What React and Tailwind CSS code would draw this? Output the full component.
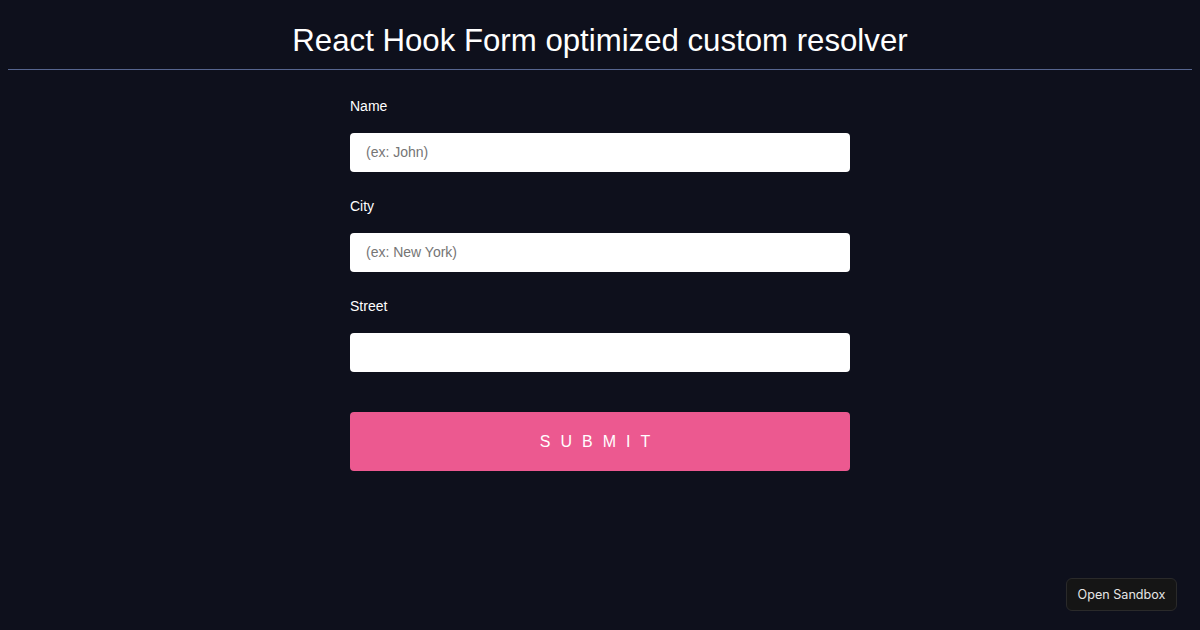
export default function App() {
  const font = { fontFamily: '"Liberation Sans", Arial, sans-serif' };
  return (
    <div className="relative w-[1200px] h-[630px] bg-[#0e101c] overflow-hidden" style={font}>
      <div className="px-[8px] pt-[22px]">
        <h1 className="text-[31.2px] leading-[37px] font-normal text-white text-center pb-[10px] border-b border-[#56658f]">
          React Hook Form optimized custom resolver
        </h1>
      </div>
      <form className="w-[500px] mx-auto pt-[2px]">
        <label className="block mt-[20px] mb-[13px] text-[14px] leading-[28px] text-white">Name</label>
        <input
          className="block w-full h-[39px] rounded-[4px] bg-white px-[16px] pb-[1px] text-[14px] text-black placeholder:text-[#757575] outline-none"
          placeholder="(ex: John)"
          style={font}
        />
        <label className="block mt-[20px] mb-[13px] text-[14px] leading-[28px] text-white">City</label>
        <input
          className="block w-full h-[39px] rounded-[4px] bg-white px-[16px] pb-[1px] text-[14px] text-black placeholder:text-[#757575] outline-none"
          placeholder="(ex: New York)"
          style={font}
        />
        <label className="block mt-[20px] mb-[13px] text-[14px] leading-[28px] text-white">Street</label>
        <input
          className="block w-full h-[39px] rounded-[4px] bg-white px-[16px] text-[14px] text-black outline-none"
          style={font}
        />
        <button
          type="button"
          className="block w-full mt-[40px] h-[59px] rounded-[4px] bg-[#ec5990] text-white text-[16px] tracking-[10px] uppercase"
          style={font}
        >
          Submit
        </button>
      </form>
      <div
        className="absolute right-[23px] bottom-[19px] w-[111px] h-[33px] flex items-center justify-center pt-[2px] rounded-[6px] bg-[#151515] border border-[#2a2a2a] text-[12.6px] text-[#e5e5e5]"
        style={{ fontFamily: 'Inter, "Noto Sans", sans-serif' }}
      >
        Open Sandbox
      </div>
    </div>
  );
}
